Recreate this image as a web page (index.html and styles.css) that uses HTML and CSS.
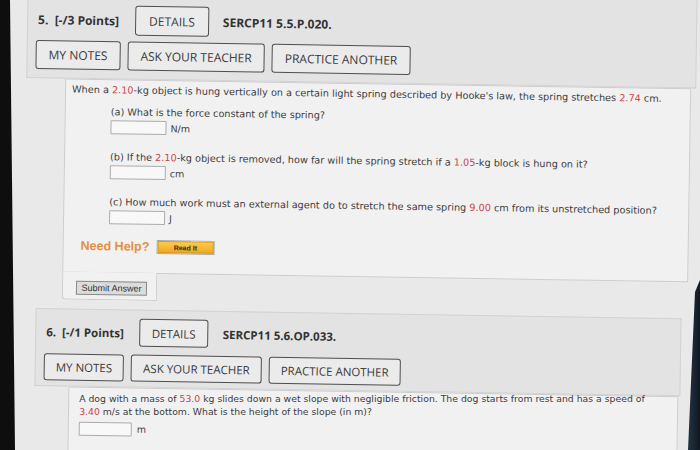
FILE: index.html
```html
<!DOCTYPE html>
<html lang="en">
<head>
<meta charset="utf-8">
<title>WebAssign questions</title>
<link rel="stylesheet" href="styles.css">
</head>
<body>
<div class="screen">
  <div class="page">
    <section class="question q5">
      <header class="qhead">
        <div class="qrow top">
          <span class="qnum">5.&nbsp; [-/3 Points]</span>
          <button class="btn details">DETAILS</button>
          <span class="qid">SERCP11 5.5.P.020.</span>
        </div>
        <div class="qrow tools">
          <button class="btn">MY NOTES</button>
          <button class="btn">ASK YOUR TEACHER</button>
          <button class="btn">PRACTICE ANOTHER</button>
        </div>
      </header>
      <div class="qbody">
        <p class="stem">When a <span class="val">2.10</span>-kg object is hung vertically on a certain light spring described by Hooke's law, the spring stretches <span class="val">2.74</span> cm.</p>
        <div class="part first">
          <p>(a) What is the force constant of the spring?</p>
          <div class="answer"><input class="inp" type="text"><span class="unit">N/m</span></div>
        </div>
        <div class="part">
          <p>(b) If the <span class="val">2.10</span>-kg object is removed, how far will the spring stretch if a <span class="val">1.05</span>-kg block is hung on it?</p>
          <div class="answer"><input class="inp" type="text"><span class="unit">cm</span></div>
        </div>
        <div class="part">
          <p>(c) How much work must an external agent do to stretch the same spring <span class="val">9.00</span> cm from its unstretched position?</p>
          <div class="answer"><input class="inp" type="text"><span class="unit">J</span></div>
        </div>
        <div class="help">
          <span class="help-label">Need Help?</span>
          <button class="readit">Read It</button>
        </div>
      </div>
      <div class="submit-tab"><button class="submit">Submit Answer</button></div>
    </section>

    <section class="question q6">
      <header class="qhead">
        <div class="qrow top">
          <span class="qnum">6.&nbsp; [-/1 Points]</span>
          <button class="btn details">DETAILS</button>
          <span class="qid">SERCP11 5.6.OP.033.</span>
        </div>
        <div class="qrow tools">
          <button class="btn">MY NOTES</button>
          <button class="btn">ASK YOUR TEACHER</button>
          <button class="btn">PRACTICE ANOTHER</button>
        </div>
      </header>
      <div class="qbody">
        <p class="stem">A dog with a mass of <span class="val">53.0</span> kg slides down a wet slope with negligible friction. The dog starts from rest and has a speed of <span class="val">3.40</span> m/s at the bottom. What is the height of the slope (in m)?</p>
        <div class="answer"><input class="inp" type="text"><span class="unit">m</span></div>
      </div>
    </section>
  </div>
  <div class="bezel-left"></div>
  <div class="bezel-right"></div>
</div>
</body>
</html>
```
FILE: styles.css
```css
html, body {
  margin: 0;
  padding: 0;
  background: #1b1b1b;
}

.screen {
  position: relative;
  width: 700px;
  height: 450px;
  overflow: hidden;
  background: #e9e9e9;
  color: #333;
  font-family: "Open Sans", "Liberation Sans", sans-serif;
}

.page {
  display: flow-root;
  width: 700px;
  height: 470px;
  margin-top: -10px;
  transform: rotate(0.9deg);
}

p { margin: 0; }

/* ---------- question header ---------- */
.qhead {
  box-sizing: border-box;
  background: #e3e3e3;
  border: 1px solid #d2d2d2;
}

.qrow {
  display: flex;
  align-items: center;
}

.qnum {
  font-weight: 700;
  white-space: pre;
}

.qid {
  font-weight: 700;
}

.btn {
  box-sizing: border-box;
  font-family: "Open Sans", "Liberation Sans", sans-serif;
  color: #3a3a3a;
  background: #ebebeb;
  border: 1px solid #4f4f4f;
  border-radius: 3px;
  margin: 0;
  white-space: nowrap;
}

/* question 5 */
.q5 .qhead {
  margin-left: 24px;
  width: 670px;
  padding: 19px 0 8px 8px;
  border-top: none;
  font-size: 12px;
}
.q5 .qrow.top { height: 30px; gap: 14px; }
.q5 .qnum { margin-left: 2px; margin-right: 2px; font-size: 12px; }
.q5 .qid { font-size: 12px; }
.q5 .btn { font-size: 12px; height: 29px; padding: 0 12px; }
.q5 .btn.details { height: 30px; padding: 0 13px; }
.q5 .qrow.tools { margin-top: 6px; gap: 7px; }

/* question 6 */
.q6 {
  margin-top: 9px;
}
.q6 .qhead {
  margin-left: 37px;
  width: 646px;
  padding: 8px 0 5px 8px;
  font-size: 11.5px;
}
.q6 .qrow.top { height: 28px; gap: 14px; }
.q6 .qnum { margin-left: 2px; margin-right: 1px; font-size: 11.5px; }
.q6 .qid { font-size: 11.5px; }
.q6 .btn { font-size: 11.5px; height: 27px; padding: 0 11px; }
.q6 .btn.details { height: 28px; padding: 0 12px; }
.q6 .qrow.tools { margin-top: 8px; gap: 7px; }

/* ---------- question body ---------- */
.qbody {
  box-sizing: border-box;
  background: #f1f1f1;
  border: 1px solid #cdcdcd;
  font-family: "DejaVu Sans", Verdana, sans-serif;
  color: #3d3d3d;
}

.q5 .qbody {
  margin-left: 63px;
  width: 626px;
  padding: 3px 6px 19px;
  font-size: 9.7px;
  line-height: 13px;
}

.q6 .qbody {
  margin-left: 71px;
  width: 610px;
  height: 75px;
  padding: 5px 22px 0 10px;
  font-size: 9.3px;
  line-height: 12.5px;
}

.q6 .stem {
  transform: rotate(-0.9deg);
  transform-origin: 0 50%;
}

.val { color: #c8464b; }

.part { margin-left: 39px; margin-top: 16px; }
.part.first { margin-top: 9px; }

.answer {
  display: flex;
  align-items: center;
  gap: 4px;
  margin-top: 2px;
}

.inp {
  box-sizing: border-box;
  width: 56px;
  height: 14px;
  margin: 0;
  padding: 0;
  background: #f8f8f8;
  border: 1px solid #acacac;
  border-radius: 1px;
}

.unit {
  font-size: 9.5px;
  color: #444;
}

.q6 .answer { margin-top: 4px; gap: 5px; }
.q6 .inp { width: 53px; }

/* need help */
.help {
  display: flex;
  align-items: center;
  gap: 7px;
  margin: 15px 0 0 11px;
}

.help-label {
  font-family: "Liberation Sans", Arial, sans-serif;
  font-weight: 700;
  font-size: 12.5px;
  color: #e38f3c;
}

.readit {
  box-sizing: border-box;
  width: 58px;
  height: 14px;
  margin: 0;
  padding: 0;
  font-family: "Liberation Sans", Arial, sans-serif;
  font-weight: 700;
  font-size: 7px;
  color: #3b2a0c;
  background: linear-gradient(#fbcf55, #f0a51f);
  border: 1px solid #a9a9a9;
  box-shadow: inset 0 0 0 1px #d99a22;
}

/* submit tab */
.submit-tab {
  display: flex;
  align-items: flex-start;
  box-sizing: border-box;
  margin-left: 63px;
  margin-top: -1px;
  width: 95px;
  height: 28px;
  padding: 9px 0 0 13px;
  background: #f1f1f1;
  border: 1px solid #cdcdcd;
  border-top: none;
  border-radius: 0 0 0 4px;
}

.submit {
  box-sizing: border-box;
  height: 14px;
  width: 71px;
  margin: 0;
  padding: 0;
  font-family: "Liberation Sans", Arial, sans-serif;
  font-size: 9px;
  color: #333;
  background: #dcdcdc;
  border: 1px solid #8a8a8a;
}

/* photo frame edges */
.bezel-left {
  position: absolute;
  left: 0;
  top: 0;
  bottom: 0;
  width: 16px;
  background: #0e0e0e;
  clip-path: polygon(0 0, 10px 0, 15px 100%, 0 100%);
}

.bezel-right {
  position: absolute;
  right: 0;
  top: 0;
  bottom: 0;
  width: 14px;
  background: linear-gradient(90deg, #26384a, #101820);
  clip-path: polygon(14px 280px, 9px 292px, 2px 450px, 14px 450px);
}
```
